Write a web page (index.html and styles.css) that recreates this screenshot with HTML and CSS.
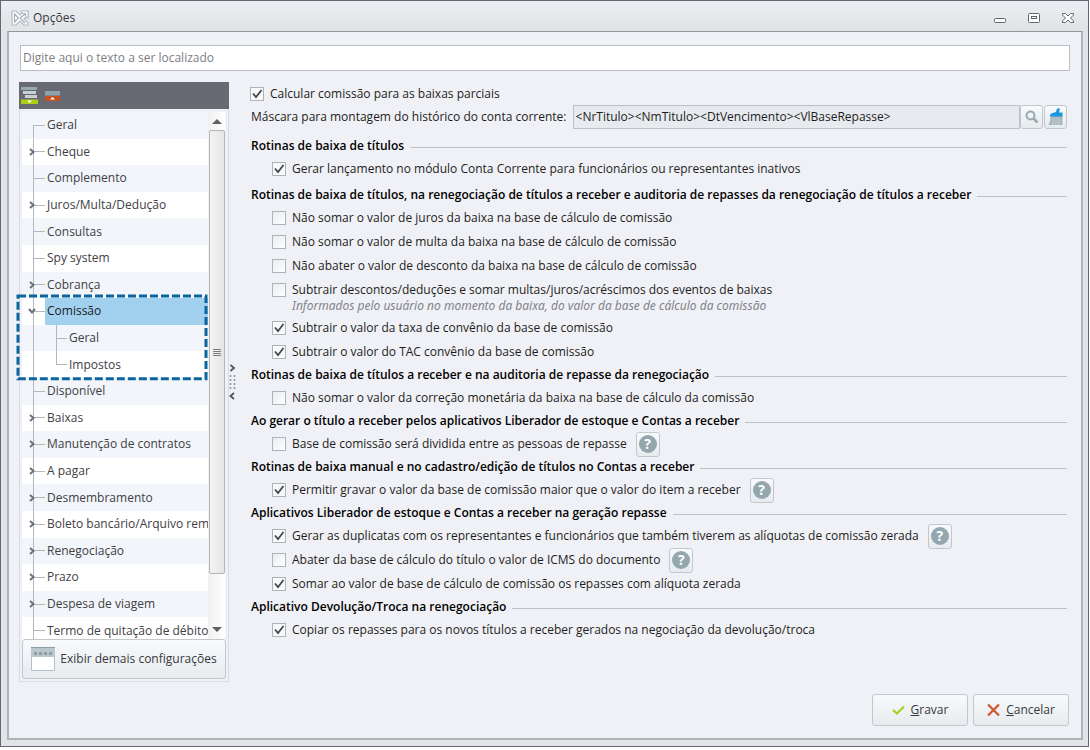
FILE: index.html
```html
<!DOCTYPE html>
<html lang="pt-BR">
<head>
  <meta charset="UTF-8" />
  <meta name="viewport" content="width=device-width, initial-scale=1.0" />
  <title>Opções</title>
  <link rel="stylesheet" href="styles.css">
</head>
<body>
  <!-- Shared icons -->
  <svg class="sprite" width="0" height="0">
    <symbol id="arrow" viewBox="0 0 6 8"><path d="M1 1l3.500 3L1 7" fill="none" stroke="#6d717c" stroke-width="2" /></symbol>
  </svg>

  <div class="window">
    <header class="titlebar">
      <svg class="logo" width="18" height="16" viewBox="0 0 18 16">
        <path d="M1 1h4l4 4 2-2-1-2h7v7l-2-1-2 2 4 4v2h-4l-4-4-4 4H1z" fill="#fff" stroke="#aebbc1" stroke-width="1.200" />
        <path d="M3.500 4v8l4-4zM9 8l5 5M14.500 3.500L9 8M14.500 3.500h-3M14.500 3.500v3" fill="none" stroke="#9fb0b7" stroke-width="1.200" />
      </svg>
      <h1>Opções</h1>
      <div class="controls">
        <button type="button" aria-label="Minimizar">
          <svg width="14" height="14" viewBox="0 0 14 14"><rect x="1.500" y="7.500" width="11" height="4" rx="1" fill="#fff" stroke="#62656e" /></svg>
        </button>
        <button type="button" aria-label="Maximizar">
          <svg width="14" height="14" viewBox="0 0 14 14"><rect x="1.500" y="2.500" width="11" height="9" rx="1" fill="#fff" stroke="#62656e" /><rect x="4.500" y="5.500" width="5" height="2" fill="#fff" stroke="#62656e" /></svg>
        </button>
        <button type="button" aria-label="Fechar">
          <svg width="14" height="14" viewBox="0 0 14 14"><path d="M1.500 2.500h3L7 5l2.500-2.500h3v1.500L9.500 7l3 3v1.500h-3L7 9l-2.500 2.500h-3V10l3-3-3-3z" fill="#fff" stroke="#62656e" /></svg>
        </button>
      </div>
    </header>

    <main class="panel">
      <input class="search" type="text" placeholder="Digite aqui o texto a ser localizado" aria-label="Localizar" />

      <div class="columns">
        <aside class="sidebar">
          <div class="toolbar">
            <button type="button" aria-label="Expandir tudo">
              <svg width="17" height="18" viewBox="0 0 17 18"><path fill="#97a9b1" d="M0 0h16v3H0z" /><path fill="#c9cfd3" d="M2 4h13v3H2zM4 8h12v3H4z" /><path fill="#b1cf12" d="M0 12.500h17V17H0z" /><path fill="#fff" d="M6 13.500h5L8.500 16z" /></svg>
            </button>
            <button type="button" aria-label="Recolher tudo">
              <svg width="15" height="18" viewBox="0 0 15 18"><path fill="#8fa3ad" d="M0 4h15v4.500H0z" /><path fill="#c9501f" d="M0 9h15v5H0z" /><path fill="#fff" d="M5 12.500h5L7.500 10z" /></svg>
            </button>
          </div>
          <div class="tree-box">
            <div class="tree">
              <ul>
                <li><span>Geral</span></li>
                <li><button type="button" aria-label="Expandir"><svg width="6" height="8"><use href="#arrow" /></svg></button><span>Cheque</span></li>
                <li><span>Complemento</span></li>
                <li><button type="button" aria-label="Expandir"><svg width="6" height="8"><use href="#arrow" /></svg></button><span>Juros/Multa/Dedução</span></li>
                <li><span>Consultas</span></li>
                <li><span>Spy system</span></li>
                <li><button type="button" aria-label="Expandir"><svg width="6" height="8"><use href="#arrow" /></svg></button><span>Cobrança</span></li>
                <li class="selected">
                  <button type="button" aria-label="Recolher"><svg class="open" width="6" height="8"><use href="#arrow" /></svg></button><span>Comissão</span>
                  <svg class="callout"><rect width="100%" height="100%" /></svg>
                </li>
                <li class="child"><span>Geral</span></li>
                <li class="child last"><span>Impostos</span></li>
                <li><span>Disponível</span></li>
                <li><button type="button" aria-label="Expandir"><svg width="6" height="8"><use href="#arrow" /></svg></button><span>Baixas</span></li>
                <li><button type="button" aria-label="Expandir"><svg width="6" height="8"><use href="#arrow" /></svg></button><span>Manutenção de contratos</span></li>
                <li><button type="button" aria-label="Expandir"><svg width="6" height="8"><use href="#arrow" /></svg></button><span>A pagar</span></li>
                <li><button type="button" aria-label="Expandir"><svg width="6" height="8"><use href="#arrow" /></svg></button><span>Desmembramento</span></li>
                <li><button type="button" aria-label="Expandir"><svg width="6" height="8"><use href="#arrow" /></svg></button><span>Boleto bancário/Arquivo remessa</span></li>
                <li><button type="button" aria-label="Expandir"><svg width="6" height="8"><use href="#arrow" /></svg></button><span>Renegociação</span></li>
                <li><button type="button" aria-label="Expandir"><svg width="6" height="8"><use href="#arrow" /></svg></button><span>Prazo</span></li>
                <li><button type="button" aria-label="Expandir"><svg width="6" height="8"><use href="#arrow" /></svg></button><span>Despesa de viagem</span></li>
                <li><span>Termo de quitação de débitos</span></li>
              </ul>
              <div class="scrollbar">
                <svg width="10" height="6"><path d="M0 6l5-5 5 5z" fill="#5f6064" /></svg>
                <div class="thumb"><i></i><i></i><i></i><i></i></div>
                <svg width="10" height="6"><path d="M0 0l5 5 5-5z" fill="#5f6064" /></svg>
              </div>
            </div>
            <button type="button" class="btn more">
              <svg width="24" height="24" viewBox="0 0 24 24"><path fill="#fff" stroke="#b5c0c6" d="M.500.500h23v23H.500z" /><path fill="#b9c6cc" d="M0 0h24v10H0z" /><path fill="#8b9fa8" d="M0 0h24v1H0zM3 5h3v3H3zM8 5h3v3H8zM13 5h3v3h-3zM18 5h3v3h-3z" /></svg>
              Exibir demais configurações
            </button>
          </div>
        </aside>

        <div class="splitter">
          <svg width="8" height="36" viewBox="0 0 8 36">
            <path d="M1.500 1l3.500 3-3.500 3M5 29l-3.500 3L5 35" fill="none" stroke="#4f5361" stroke-width="1.800" />
            <path d="M1.500 11v15M5.500 11v15" stroke="#8d929c" stroke-width="1.500" stroke-dasharray="2 2" />
          </svg>
        </div>

        <form class="options">
          <label class="option top"><input type="checkbox" checked />Calcular comissão para as baixas parciais</label>
          <div class="mask">
            <label for="mask">Máscara para montagem do histórico do conta corrente:</label>
            <input type="text" id="mask" value="&lt;NrTitulo&gt;&lt;NmTitulo&gt;&lt;DtVencimento&gt;&lt;VlBaseRepasse&gt;" readonly />
            <button type="button" class="btn" aria-label="Pesquisar">
              <svg width="14" height="14" viewBox="0 0 14 14"><circle cx="5.500" cy="5.500" r="4" fill="none" stroke="#98abb2" stroke-width="2" /><path d="M8.500 8.500l4 4" stroke="#98abb2" stroke-width="2.500" /></svg>
            </button>
            <button type="button" class="btn" aria-label="Limpar">
              <svg width="16" height="18" viewBox="0 0 16 18"><path d="M2.500 8h12v9H.500c1.500-2.500 2-6 2-9z" fill="#a9b6bd" /><path d="M5 10v7M8 10v7M11 10v7" stroke="#c9d1d5" /><path d="M2 8.500V7c1-2 4-2.500 6-3l1-3.500h3L11 4.500h3.500v4z" fill="#1897dd" /></svg>
            </button>
          </div>

          <h2 class="first">Rotinas de baixa de títulos</h2>
          <label class="option"><input type="checkbox" checked />Gerar lançamento no módulo Conta Corrente para funcionários ou representantes inativos</label>

          <h2 class="second">Rotinas de baixa de títulos, na renegociação de títulos a receber e auditoria de repasses da renegociação de títulos a receber</h2>
          <label class="option"><input type="checkbox" />Não somar o valor de juros da baixa na base de cálculo de comissão</label>
          <label class="option"><input type="checkbox" />Não somar o valor de multa da baixa na base de cálculo de comissão</label>
          <label class="option"><input type="checkbox" />Não abater o valor de desconto da baixa na base de cálculo de comissão</label>
          <label class="option with-hint"><input type="checkbox" /><span>Subtrair descontos/deduções e somar multas/juros/acréscimos dos eventos de baixas<em>Informados pelo usuário no momento da baixa, do valor da base de cálculo da comissão</em></span></label>
          <label class="option"><input type="checkbox" checked />Subtrair o valor da taxa de convênio da base de comissão</label>
          <label class="option"><input type="checkbox" checked />Subtrair o valor do TAC convênio da base de comissão</label>

          <h2>Rotinas de baixa de títulos a receber e na auditoria de repasse da renegociação</h2>
          <label class="option"><input type="checkbox" />Não somar o valor da correção monetária da baixa na base de cálculo da comissão</label>

          <h2>Ao gerar o título a receber pelos aplicativos Liberador de estoque e Contas a receber</h2>
          <div class="row">
            <label class="option"><input type="checkbox" />Base de comissão será dividida entre as pessoas de repasse</label>
            <button type="button" class="btn help" aria-label="Ajuda"><span>?</span></button>
          </div>

          <h2>Rotinas de baixa manual e no cadastro/edição de títulos no Contas a receber</h2>
          <div class="row">
            <label class="option"><input type="checkbox" checked />Permitir gravar o valor da base de comissão maior que o valor do item a receber</label>
            <button type="button" class="btn help" aria-label="Ajuda"><span>?</span></button>
          </div>

          <h2>Aplicativos Liberador de estoque e Contas a receber na geração repasse</h2>
          <div class="row">
            <label class="option"><input type="checkbox" checked />Gerar as duplicatas com os representantes e funcionários que também tiverem as alíquotas de comissão zerada</label>
            <button type="button" class="btn help" aria-label="Ajuda"><span>?</span></button>
          </div>
          <div class="row">
            <label class="option"><input type="checkbox" />Abater da base de cálculo do título o valor de ICMS do documento</label>
            <button type="button" class="btn help" aria-label="Ajuda"><span>?</span></button>
          </div>
          <label class="option"><input type="checkbox" checked />Somar ao valor de base de cálculo de comissão os repasses com alíquota zerada</label>

          <h2>Aplicativo Devolução/Troca na renegociação</h2>
          <label class="option"><input type="checkbox" checked />Copiar os repasses para os novos títulos a receber gerados na negociação da devolução/troca</label>
        </form>
      </div>

      <footer class="actions">
        <button type="button" class="btn save">
          <svg width="13" height="10" viewBox="0 0 13 10"><path d="M1 5l4 3.500L12 1.500" fill="none" stroke="#a9cf1c" stroke-width="2.200" /></svg>
          <span><u>G</u>ravar</span>
        </button>
        <button type="button" class="btn cancel">
          <svg width="13" height="12" viewBox="0 0 13 12"><path d="M1 .500l11 11M12 .500l-11 11" stroke="#d2572b" stroke-width="2.200" /></svg>
          <span><u>C</u>ancelar</span>
        </button>
      </footer>
    </main>
  </div>
</body>
</html>
```
FILE: styles.css
```css
* {
  box-sizing: border-box;
}

body {
  margin: 0;
  font-family: "Open Sans", "Noto Sans", sans-serif;
  font-size: 12px;
  line-height: 16px;
  color: #1d1d20;
  background: #fff;
}

button,
input {
  font: inherit;
  color: inherit;
}

button {
  padding: 0;
  border: 0;
  background: none;
}

svg {
  display: block;
}

.sprite {
  position: absolute;
}

.window {
  display: flex;
  flex-direction: column;
  min-height: calc(100vh - 3px);
  margin-right: 1px;
  padding: 0 5px 6px 6px;
  border: 1px solid #666974;
  background: linear-gradient(#ecedf2, #e0e4e6 30px);
}

/* Title bar */
.titlebar {
  display: flex;
  align-items: center;
  height: 30px;
  padding: 4px 8px 0 4px;
}

.titlebar h1 {
  margin: 0 0 0 4px;
  font-size: 12px;
  font-weight: normal;
  color: #37383d;
}

.controls {
  display: flex;
  gap: 20px;
  margin-left: auto;
}

/* Main panel */
.panel {
  flex: 1;
  display: flex;
  flex-direction: column;
  padding: 13px 11px 12px;
  border: 2px solid #b0b4b9;
  border-top: 1px solid #91959b;
  background: #f0f1f6;
}

.search {
  width: 100%;
  height: 26px;
  padding: 0 2px 2px;
  border: 1px solid #b8bec5;
  background: #fff;
}

.search::placeholder {
  color: #7c7e84;
}

.columns {
  flex: 1;
  display: flex;
  margin: 11px 0 0 -1px;
}

/* Left column */
.sidebar {
  display: flex;
  flex-direction: column;
  flex: none;
  width: 210px;
}

.toolbar {
  display: flex;
  gap: 7px;
  height: 27px;
  padding: 4px 2px;
  background: #686a73;
}

.tree-box {
  flex: 1;
  display: flex;
  flex-direction: column;
  padding: 3px 2px 2px;
  border: 1px solid #d8dce3;
  border-top: 0;
}

.tree {
  flex: 1;
  display: flex;
  padding-right: 1px;
  color: #3f4045;
}

.tree ul {
  flex: 1;
  display: grid;
  grid-auto-rows: 1fr;
  min-width: 0;
  margin: 0 0 -5px;
  padding: 0;
  list-style: none;
}

.tree li {
  --line: linear-gradient(#b4b8be, #b4b8be);
  display: flex;
  min-width: 0;
  align-items: center;
  padding-left: 23px;
  background:
    var(--line) 11px 0 / 1px 100% no-repeat,
    var(--line) 11px 50% / 12px 1px no-repeat #fff;
}

.tree li:nth-child(odd) {
  background-color: #f2f5fa;
}

.tree li:first-child {
  background-position: 11px 100%, 11px 50%;
  background-size: 1px 50%, 12px 1px;
}

.tree li.child {
  padding-left: 45px;
  background-image: var(--line), var(--line), var(--line);
  background-position: 11px 0, 34px 50%, 34px 0;
  background-size: 1px 100%, 11px 1px, 1px 100%;
  background-repeat: no-repeat;
}

.tree li.last {
  background-size: 1px 100%, 11px 1px, 1px 50%;
}

.tree li button {
  flex: none;
  width: 16px;
  margin-left: -16px;
}

.tree li span {
  flex: 1;
  padding-left: 2px;
  overflow: hidden;
  white-space: nowrap;
}

.tree li .open {
  transform: rotate(90deg);
}

.tree .selected {
  position: relative;
}

.tree .selected span {
  align-self: stretch;
  align-content: center;
  color: #1a1a1c;
  background: #a2d1ef;
}

/* Callout around the open branch */
.callout {
  position: absolute;
  top: -2px;
  left: -4px;
  width: calc(100% + 2px);
  height: calc(300% + 3px);
  overflow: visible;
  pointer-events: none;
}

.callout rect {
  fill: none;
  stroke: #0a65a0;
  stroke-width: 3px;
  stroke-dasharray: 8 3;
}

.scrollbar {
  display: flex;
  flex-direction: column;
  align-items: center;
  width: 17px;
  padding: 6px 0;
  background: linear-gradient(to right, #f0f0f2, #fff);
}

.scrollbar .thumb {
  display: flex;
  flex-direction: column;
  justify-content: center;
  align-items: center;
  gap: 1px;
  flex: 1;
  width: 16px;
  margin: 6px 0 53px;
  border: 1px solid #b3b6ba;
  border-radius: 2px;
  background: linear-gradient(to right, #f4f4f5, #e4e5e6);
}

.thumb i {
  width: 8px;
  height: 1px;
  background: #7c7e82;
}

/* Buttons */
.btn {
  display: flex;
  align-items: center;
  justify-content: center;
  border: 1px solid #c3c7cc;
  border-radius: 3px;
  background: linear-gradient(#f8fafc, #e7ebee);
}

.btn.more {
  position: relative;
  gap: 5px;
  height: 40px;
  color: #37383c;
}

.splitter {
  display: flex;
  align-items: center;
  width: 21px;
}

/* Options */
.options {
  flex: 1;
  min-width: 0;
  padding-right: 3px;
}

.option {
  display: flex;
  align-items: center;
  gap: 6px;
  height: 24px;
  padding-left: 22px;
}

.option.top {
  padding-left: 0;
}

.option input {
  flex: none;
  appearance: none;
  width: 14px;
  height: 14px;
  margin: 0;
  border: 1px solid #aeb3b9;
  background: linear-gradient(135deg, #e9ebee, #fff);
}

.option input:checked {
  background: url("data:image/svg+xml,%3Csvg xmlns='http://www.w3.org/2000/svg' viewBox='0 0 12 12'%3E%3Cpath d='M2 5.500l3 3.500 5.500-7' fill='none' stroke='%23454648' stroke-width='1.800'/%3E%3C/svg%3E") center / 12px, #f8f9fa;
}

.option.with-hint {
  align-items: flex-start;
  height: 38px;
  padding-top: 4px;
}

.with-hint input {
  margin-top: 1px;
}

.option em {
  display: block;
  font-family: "Noto Sans", sans-serif;
  color: #818389;
}

.mask {
  display: flex;
  align-items: center;
  height: 24px;
  margin-top: -1px;
  padding-left: 1px;
}

.mask input {
  flex: 1;
  min-width: 0;
  height: 24px;
  margin-left: 6px;
  padding: 0 2px 2px;
  border: 1px solid #b9c0c6;
  background: #e7ebef;
}

.mask .btn {
  width: 23px;
  height: 24px;
}

.mask .btn + .btn {
  margin-left: 1px;
}

.options h2 {
  display: flex;
  align-items: center;
  gap: 6px;
  height: 22px;
  margin: 0;
  padding-left: 1px;
  font-size: 12px;
  font-weight: 600;
  white-space: nowrap;
  color: #000;
}

.options h2::after {
  content: "";
  flex: 1;
  height: 1px;
  margin-top: 2px;
  background: #bcc0c9;
}

.options h2.first {
  margin-top: 6px;
}

.options h2.second {
  margin-top: 3px;
}

.row {
  display: flex;
  align-items: center;
  gap: 9px;
  height: 24px;
}

.btn.help {
  width: 24px;
  height: 25px;
}

.help span {
  width: 18px;
  border-radius: 9px;
  font-size: 14px;
  font-weight: bold;
  line-height: 18px;
  color: #fff;
  background: #94a7af;
}

/* Footer */
.actions {
  display: flex;
  justify-content: flex-end;
  gap: 5px;
  margin-top: 12px;
  padding-right: 1px;
}

.actions .btn {
  gap: 6px;
  width: 96px;
  height: 32px;
  color: #37383c;
}
```
